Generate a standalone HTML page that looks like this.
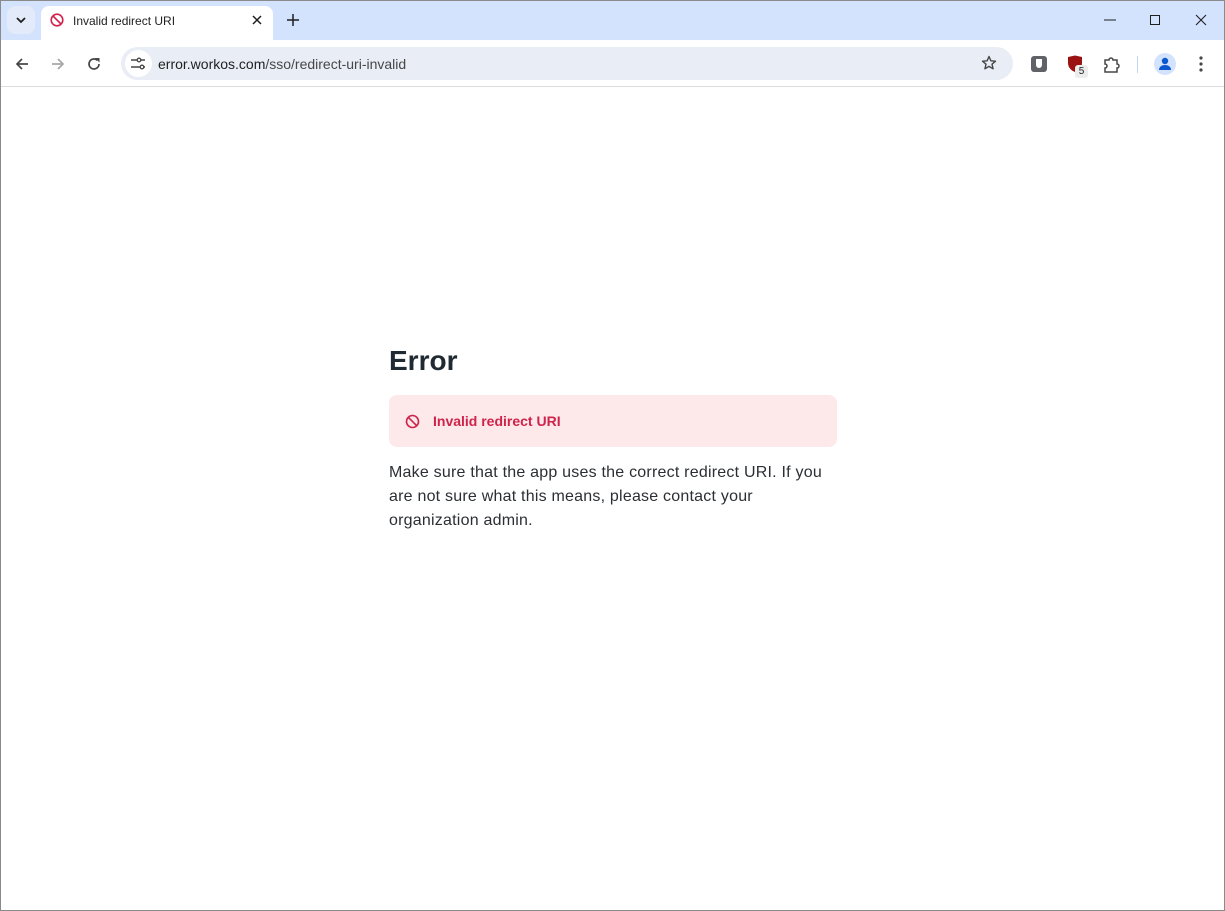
<!DOCTYPE html>
<html><head><meta charset="utf-8"><style>
*{margin:0;padding:0;box-sizing:border-box}
body{width:1225px;height:911px;overflow:hidden;font-family:"Liberation Sans",sans-serif;background:#fff;position:relative}
.frame{position:absolute;left:0;top:0;width:1225px;height:911px;border:1px solid #8a8a8a;z-index:5;pointer-events:none}
.strip{position:absolute;left:0;top:0;width:1225px;height:40px;background:#d3e3fd}
.tab{position:absolute;left:41px;top:6px;width:232px;height:34px;background:#fff;border-radius:8px 8px 0 0}
.tb{position:absolute;left:0;top:40px;width:1225px;height:47px;background:#fff;border-bottom:1px solid #dadce0}
.omni{position:absolute;left:121px;top:7px;width:892px;height:33px;background:#e9eef6;border-radius:17px}
.abs{position:absolute}
</style></head><body>
<div class="frame"></div>
<div class="strip"></div>
<div class="abs" style="left:7px;top:6px;width:28px;height:28px;background:#e3ebfa;border-radius:8px"></div>
<svg class="abs" style="left:15px;top:15px" width="12" height="10"><path d="M2 3l4 4 4-4" stroke="#1f1f1f" stroke-width="1.8" fill="none"/></svg>
<div class="tab"></div>
<svg class="abs" style="left:50px;top:13px" width="14" height="14"><circle cx="7" cy="7" r="5.8" stroke="#d0234b" stroke-width="1.6" fill="none"/><path d="M3 3l8 8" stroke="#d0234b" stroke-width="1.6"/></svg>
<div class="abs" style="left:73px;top:14px;font-size:12px;color:#1f1f1f">Invalid redirect URI</div>
<svg class="abs" style="left:252px;top:15px" width="10" height="10"><path d="M1 1l8 8M9 1l-8 8" stroke="#1f1f1f" stroke-width="1.5"/></svg>
<svg class="abs" style="left:287px;top:14px" width="12" height="12"><path d="M6 0v12M0 6h12" stroke="#1f1f1f" stroke-width="1.5"/></svg>
<svg class="abs" style="left:1104px;top:19px" width="12" height="2"><path d="M0 1h12" stroke="#1f1f1f"/></svg>
<div class="abs" style="left:1150px;top:15px;width:10px;height:10px;border:1px solid #1f1f1f"></div>
<svg class="abs" style="left:1195px;top:14px" width="12" height="12"><path d="M1 1l10 10M11 1l-10 10" stroke="#1f1f1f" stroke-width="1.1"/></svg>
<div class="tb">
<svg class="abs" style="left:14px;top:16px" width="16" height="16"><path d="M14 8H3M8 3L3 8l5 5" stroke="#474747" stroke-width="1.7" fill="none"/></svg>
<svg class="abs" style="left:50px;top:16px" width="16" height="16"><path d="M2 8h11M8 3l5 5-5 5" stroke="#a8a8a8" stroke-width="1.7" fill="none"/></svg>
<svg class="abs" style="left:86px;top:16px" width="16" height="16"><path d="M13 8a5 5 0 1 1-1.5-3.6" stroke="#474747" stroke-width="1.7" fill="none"/><path d="M9 2h4.5v4.5z" fill="#474747"/></svg>
<div class="omni">
<div class="abs" style="left:4px;top:3px;width:27px;height:27px;background:#fff;border-radius:50%"></div>
<svg class="abs" style="left:9px;top:9px" width="16" height="16"><path d="M1 4h6M1 11h9M11 4h4M14 11h1" stroke="#474747" stroke-width="1.5"/><circle cx="9" cy="4" r="1.8" stroke="#474747" stroke-width="1.3" fill="none"/><circle cx="12" cy="11" r="1.8" stroke="#474747" stroke-width="1.3" fill="none"/></svg>
<div class="abs" style="left:37px;top:9px;font-size:14px;color:#1f1f1f">error.workos.com<span style="color:#474747">/sso/redirect-uri-invalid</span></div>
<svg class="abs" style="left:860px;top:8px" width="16" height="16"><path d="M8 1.5l1.9 4.3 4.6.4-3.5 3 1.1 4.6L8 11.4l-4.1 2.4 1.1-4.6-3.5-3 4.6-.4z" stroke="#474747" stroke-width="1.4" fill="none" stroke-linejoin="round"/></svg>
</div>
<div class="abs" style="left:1031px;top:16px;width:16px;height:16px;background:#5f6368;border-radius:3px"></div>
<div class="abs" style="left:1036px;top:19px;width:6px;height:9px;background:#fff;border-radius:0 0 3px 3px"></div>
<svg class="abs" style="left:1067px;top:15px" width="16" height="18"><path d="M1 2l7-1.5 7 1.5v6c0 5-4 8-7 9-3-1-7-4-7-9z" fill="#9b1212"/></svg>
<div class="abs" style="left:1075px;top:25px;width:13px;height:13px;background:#ececec;border-radius:3px;font-size:10px;text-align:center;line-height:13px;color:#1f1f1f">5</div>
<svg class="abs" style="left:1103px;top:16px" width="18" height="18"><path d="M2 4h4a2 2 0 0 1 4 0h4v4a2 2 0 0 1 0 4v4H2v-4a2 2 0 0 0 0-4z" stroke="#474747" stroke-width="1.5" fill="none"/></svg>
<div class="abs" style="left:1137px;top:16px;width:1px;height:17px;background:#c4d6f5"></div>
<div class="abs" style="left:1154px;top:13px;width:22px;height:22px;background:#d3e3fd;border-radius:50%"></div>
<svg class="abs" style="left:1157px;top:16px" width="16" height="16"><circle cx="8" cy="5" r="3.2" fill="#0b57d0"/><path d="M2 14c0-3.5 3-5 6-5s6 1.5 6 5z" fill="#0b57d0"/></svg>
<svg class="abs" style="left:1198px;top:16px" width="6" height="16"><circle cx="3" cy="2" r="1.6" fill="#474747"/><circle cx="3" cy="8" r="1.6" fill="#474747"/><circle cx="3" cy="14" r="1.6" fill="#474747"/></svg>
</div>
<div class="abs" style="left:389px;top:345px;font-size:28px;font-weight:bold;color:#1f2a33">Error</div>
<div class="abs" style="left:389px;top:395px;width:448px;height:52px;background:#fde8ea;border-radius:8px">
<svg class="abs" style="left:16px;top:19px" width="15" height="15"><circle cx="7.5" cy="7.5" r="6" stroke="#d0234b" stroke-width="1.6" fill="none"/><path d="M3.3 3.3l8.4 8.4" stroke="#d0234b" stroke-width="1.6"/></svg>
<div class="abs" style="left:44px;top:18px;font-size:14px;font-weight:bold;color:#d0234b">Invalid redirect URI</div>
</div>
<div class="abs" style="left:389px;top:461px;width:448px;font-size:16px;line-height:24px;letter-spacing:0.22px;color:#2b2f33">Make sure that the app uses the correct redirect URI. If you<br>are not sure what this means, please contact your<br>organization admin.</div>
</body></html>
